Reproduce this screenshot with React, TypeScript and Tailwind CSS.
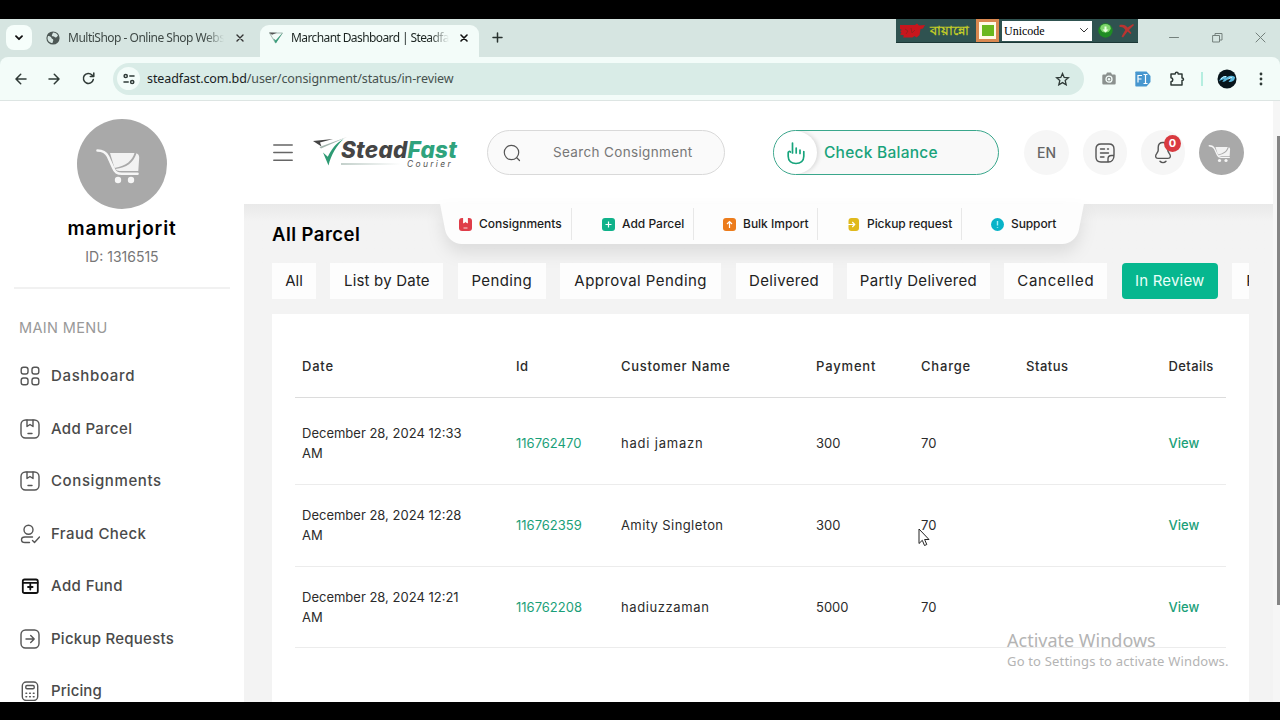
import type { ReactNode, SVGProps } from 'react';

function Svg({ children, ...props }: SVGProps<SVGSVGElement>) {
  return (
    <svg fill="none" stroke="currentColor" strokeLinecap="round" strokeLinejoin="round" {...props}>
      {children}
    </svg>
  );
}

function CartLogo({ size }: { size: number }) {
  return (
    <svg width={size} height={size} viewBox="0 0 90 90" className="shrink-0">
      <circle cx="45" cy="45" r="45" fill="#a9a9a9" />
      <path d="M20.500 31.500c6 0 8.500 2 10.500 6l5 11c2 5 4 6.300 9 6.300h15.500" fill="none" stroke="#f6f6f6" strokeWidth="2.600" strokeLinecap="round" />
      <path d="M33 34h24.500c-2 7-8 13-20 15z" fill="#f2f2f2" />
      <path d="M59.500 34.300c1.800.7 2.700 2 2.700 4.200L61.300 52H42.500c-2 0-3.200-.8-4-2 11-1.200 18-6.200 21-15.700z" fill="#f2f2f2" />
      <circle cx="41" cy="61" r="3.200" fill="#f6f6f6" />
      <circle cx="54" cy="61" r="3.200" fill="#f6f6f6" />
    </svg>
  );
}

function TabStrip() {
  return (
    <div className="flex h-[38px] items-end bg-[#d6e5e1] pl-[6px] font-['Noto_Sans',sans-serif] text-[12px] tracking-[-0.500px] text-[#3f4946]">
      <button className="mb-[7px] flex h-[25px] w-[26px] items-center justify-center rounded-[8px] bg-[#f6fefb]">
        <Svg width="8" height="6" viewBox="0 0 8 6" stroke="#111" strokeWidth="1.800"><path d="M1 1.200 4 4.200 7 1.200" /></Svg>
      </button>
      <div className="flex h-[38px] w-[228px] items-center pl-[14px]">
        <svg width="14" height="14" viewBox="0 0 14 14">
          <circle cx="7" cy="7" r="6.600" fill="#4d5855" />
          <path d="M2 5c1.500 0 3 .5 3.500 2 .4 1.200 2 .8 1.800 2.300L6.500 12C3.500 12 1.500 9.500 1.500 7zM7 1.500c2 0 4 1 5 3.200-1 .3-1 1.600-2.200 1.800-1.200.2-1.500-1.200-2.800-1.200S5.500 4 6.300 3.200z" fill="#d6e5e1" />
        </svg>
        <span className="ml-[8px] w-[156px] overflow-hidden [mask-image:linear-gradient(to_right,#000_88%,transparent)] whitespace-nowrap">MultiShop - Online Shop Webs</span>
        <Svg className="ml-[12px]" width="8" height="8" viewBox="0 0 8 8" stroke="#333" strokeWidth="1.400"><path d="m1 1 6 6M7 1 1 7" /></Svg>
      </div>
      <div className="flex h-[32px] w-[219px] items-center rounded-t-[9px] bg-[#f3fcf9] pb-[6px] pl-[9px] text-[#1b2421]">
        <svg width="14" height="12" viewBox="0 0 14 12">
          <path d="M.5 1h13L6.500 11z" fill="none" stroke="#9fb3ac" strokeWidth=".9" />
          <path d="M0 .5l8 .3-5 2z" fill="#555" />
          <path d="M13.800.5 6.800 11.500 4.300 6.500l2.500 1.800z" fill="#3b9f7d" />
        </svg>
        <span className="ml-[8px] w-[158px] overflow-hidden [mask-image:linear-gradient(to_right,#000_88%,transparent)] tracking-[-0.600px] whitespace-nowrap">Marchant Dashboard | Steadfas</span>
        <Svg className="ml-[11px]" width="8" height="8" viewBox="0 0 8 8" stroke="#111" strokeWidth="1.600"><path d="m1 1 6 6M7 1 1 7" /></Svg>
      </div>
      <Svg className="mb-[14px] ml-[13px]" width="11" height="11" viewBox="0 0 11 11" stroke="#28322f" strokeWidth="1.500"><path d="M5.500 1v9M1 5.500h9" /></Svg>
      <div className="mb-[14px] ml-auto flex items-center gap-[32px] pr-[14px] text-[#74807c]">
        <Svg width="11" height="11" viewBox="0 0 11 11"><path d="M.5 5.500h9" /></Svg>
        <Svg width="11" height="11" viewBox="0 0 11 11"><path d="M1 3.500h6.500V10H1zM3 3.500v-2h7V8H7.500" /></Svg>
        <Svg width="11" height="11" viewBox="0 0 11 11"><path d="m1 1 9 9M10 1l-9 9" /></Svg>
      </div>
    </div>
  );
}

function BijoyBar() {
  return (
    <div className="absolute top-[19px] left-[896px] flex h-[24px] w-[242px] items-center border-b border-[#1b3735] bg-[#2f5250]">
      <svg className="ml-[4px] shrink-0" width="26" height="16" viewBox="0 0 26 16">
        <path d="M0 2h15l2-1.500 2 2 6-.5-2 3.500-2.500.5-1 6-3 2.500-2-1.500-2 1.500H3l1-2-4-1 1.500-2L0 8l2-1-2-1z" fill="#c8161d" />
        <path d="m5 6 3 2-2 3M11 5l1 5 3-3" stroke="#96201f" fill="none" />
      </svg>
      <span className="ml-[3px] w-[40px] text-center text-[13px] leading-none font-bold whitespace-nowrap text-[#c0ca28]">বায়ান্নো</span>
      <div className="ml-[7px] flex h-[23px] w-[23px] shrink-0 items-center justify-center border-[3px] border-[#d98850] bg-[#fffbe6]">
        <div className="h-[11px] w-[12px] bg-[#6ab81e]" />
      </div>
      <div className="ml-[3px] flex h-[20px] w-[90px] shrink-0 items-center justify-between bg-white pr-[4px] pl-[2px] font-['Liberation_Serif',serif] text-[12px] text-black">
        Unicode
        <Svg width="8" height="5" viewBox="0 0 8 5" stroke="#333"><path d="m.5.5 3.500 3.500L7.500.5" /></Svg>
      </div>
      <svg className="ml-[6px] shrink-0" width="15" height="15" viewBox="0 0 15 15">
        <circle cx="7.500" cy="7.500" r="7.200" fill="#1f8c24" />
        <ellipse cx="7.500" cy="5.200" rx="5.200" ry="4.200" fill="#7fd46d" />
        <path d="M6.500 3.500h2V6.500h2l-3 3-3-3h2z" fill="#e7ffe0" />
      </svg>
      <svg className="ml-[6px] shrink-0" width="16" height="16" viewBox="0 0 16 16">
        <path d="M.5 2c4.500-1 6.500.5 8 2.500L14 1l1 1-5 5 2.500 3-1 1L8.500 8.500 4 14.500l-1.500-1L6.300 7C5 4.500 3.500 3.700.5 4z" fill="#ba3431" />
      </svg>
    </div>
  );
}

function Toolbar() {
  return (
    <div className="flex h-[44px] items-center rounded-t-[8px] border-b border-[#dde5e3] bg-[#f3fcf9] pl-[15px] font-['Noto_Sans',sans-serif] text-[#2f3a37]">
      <Svg width="12" height="12" viewBox="0 0 12 12" strokeWidth="1.500"><path d="M11 6H1.200M5.700 1.300 1 6l4.700 4.700" /></Svg>
      <Svg className="ml-[21px]" width="12" height="12" viewBox="0 0 12 12" strokeWidth="1.500"><path d="M1 6h9.800M6.300 1.300 11 6l-4.700 4.700" /></Svg>
      <Svg className="ml-[22px]" width="13" height="13" viewBox="0 0 13 13" strokeWidth="1.500"><path d="M11.300 7.500A5 5 0 1 1 10 2.900l1.500 1.500M11.800 1v3.500H8.300" /></Svg>
      <div className="ml-[18px] flex h-[32px] w-[971px] items-center rounded-full bg-[#d9ece7] pr-[14px] pl-[4px]">
        <div className="flex h-[23px] w-[23px] items-center justify-center rounded-full bg-[#f3fcf9]">
          <Svg width="12" height="12" viewBox="0 0 12 12" strokeWidth="1.500"><circle cx="2.700" cy="3" r="1.600" /><path d="M6.800 3H11M1 9h4.200" /><circle cx="9.200" cy="9" r="1.600" /></Svg>
        </div>
        <span className="ml-[7px] pt-[1px] text-[12.500px] tracking-[-0.100px] whitespace-nowrap text-[#46514e]"><span className="text-[#18211e]">steadfast.com.bd</span>/user/consignment/status/in-review</span>
        <Svg className="ml-auto" width="15" height="14" viewBox="0 0 15 14" strokeWidth="1.300" strokeLinejoin="miter"><path d="m7.500 1.500 1.700 3.900 4.200.4-3.200 2.800 1 4.200-3.700-2.200-3.700 2.200 1-4.200L1.600 5.800l4.200-.4z" /></Svg>
      </div>
      <svg className="ml-[18px]" width="14" height="13" viewBox="0 0 14 13">
        <path d="M1.500 2.500H4L5 .5h4l1 2h2.500q1.200 0 1.200 1.200v7.500q0 1.300-1.200 1.300h-11Q.3 12.500.3 11.200V3.700q0-1.200 1.200-1.200z" fill="#8b918f" />
        <circle cx="7" cy="7.200" r="3" fill="none" stroke="#f3fcf9" strokeWidth="1.300" /><circle cx="7" cy="7.200" r="1.200" fill="#f3fcf9" />
      </svg>
      <svg className="ml-[19px]" width="16" height="16" viewBox="0 0 16 16">
        <path d="M1 .5h10.500L15.500 5v6l-4 4.500H1q-.7 0-.7-.7V1.200Q.300.500 1 .500z" fill="#4797cf" />
        <path d="M3 11.500V4.500h4M3 8h3.500M8.500 3.500h1.200q.8 0 .8.8v7.400q0 .8-.8.800H8.500M12.500 3.500h-1.200q-.8 0-.8.800v7.400q0 .8.8.8h1.200" stroke="#fff" fill="none" strokeWidth="1.200" />
      </svg>
      <Svg className="ml-[18px]" width="16" height="16" viewBox="0 0 16 16" strokeWidth="1.500"><path d="M2 3h4.200c0-2.300 3-2.300 3 0H13v4c2 0 2 2.600 0 2.600V14H2v-3.200c2.400-.3 2.400-3.700 0-4z" /></Svg>
      <div className="ml-[16px] h-[14px] w-[2px] bg-[#b5eee0]" />
      <svg className="ml-[14px]" width="20" height="20" viewBox="0 0 20 20">
        <circle cx="10" cy="10" r="9.500" fill="#07141b" />
        <path d="M2 12.500c1-4 4-6 8-5.500l-1.500 2.500C11 6.500 15 6 18 8c0 3-2 5-6.500 5l2.500-3.500c-4 0-5 3.500-8.500 3.500 0-1 1-2 2-2.500-2 0-4 .5-5.500 2z" fill="#5bb9de" />
        <path d="M4 10c2-2 3-2.500 5-2.500M11 10.500c1-1.500 3-2 4-2" stroke="#d5f3ff" fill="none" />
      </svg>
      <svg className="ml-[22px]" width="4" height="16" viewBox="0 0 4 16" fill="#2f3a37"><circle cx="2" cy="3" r="1.400" /><circle cx="2" cy="8" r="1.400" /><circle cx="2" cy="13" r="1.400" /></svg>
    </div>
  );
}

const boxIcon = (
  <>
    <rect x="1" y="1" width="18" height="18" rx="4.500" />
    <path d="M7 1v6.500L10 5.500l3 2V1M8 14.500h4" />
  </>
);

const menu: { label: string; track: string; icon: ReactNode; dark?: boolean }[] = [
  { label: 'Dashboard', track: 'tracking-[0.650px]', icon: <><rect x="1.200" y="1.200" width="6.800" height="6.800" rx="2.200" /><rect x="12" y="1.200" width="6.800" height="6.800" rx="2.200" /><rect x="1.200" y="12" width="6.800" height="6.800" rx="2.200" /><rect x="12" y="12" width="6.800" height="6.800" rx="2.200" /></> },
  { label: 'Add Parcel', track: 'tracking-[0.350px]', icon: boxIcon },
  { label: 'Consignments', track: 'tracking-[0.600px]', icon: boxIcon },
  { label: 'Fraud Check', track: 'tracking-[0.400px]', icon: <><circle cx="8.500" cy="5.800" r="4.500" /><path d="M12.500 13H5c-2.400 0-3.500 1.200-3.500 2.700S2.600 18.500 5 18.500h4.500M12.500 16.500l2 2L19.500 13" /></> },
  { label: 'Add Fund', track: 'tracking-[0.400px]', dark: true, icon: <><rect x="2.800" y="3.500" width="15" height="13.500" rx="1.800" /><path d="M3 6.800h14.600M10.300 8.500v5M8 11h4.600" /></> },
  { label: 'Pickup Requests', track: 'tracking-[0.250px]', icon: <><rect x="1" y="1" width="18" height="18" rx="4.500" /><path d="M6 10h8M10.700 6.500 14.200 10l-3.500 3.500" /></> },
  { label: 'Pricing', track: 'tracking-[0.100px]', icon: <><rect x="2.300" y="1" width="15.400" height="18.500" rx="4" /><rect x="5.800" y="4.500" width="8.400" height="3.200" rx="1.200" /><path d="M6 12.300h.6M9.700 12.300h.6M13.400 12.300h.6M6 15.800h.6M9.700 15.800h.6M13.400 15.800h.6" strokeWidth="1.600" /></> },
];

function Sidebar() {
  return (
    <aside className="flex w-[244px] shrink-0 flex-col bg-white">
      <div className="flex shrink-0 flex-col items-center pt-[18px]">
        <CartLogo size={90} />
        <div className="mt-[7px] text-[19px] leading-[26px] font-semibold tracking-[0.850px] text-black">mamurjorit</div>
        <div className="mt-[5px] text-[14px] leading-[20px] text-[#777]">ID: 1316515</div>
      </div>
      <div className="mx-[14px] mt-[20px] h-[2px] shrink-0 bg-[#f1f1f1]" />
      <div className="mt-[29px] ml-[19px] shrink-0 text-[14.500px] leading-[20px] tracking-[0.350px] text-[#999]">MAIN MENU</div>
      <nav className="mt-[12px] flex shrink-0 flex-col">
        {menu.map((m) => (
          <a key={m.label} className="flex h-[52.500px] shrink-0 items-center gap-[11px] pl-[20px] text-[15px] font-medium text-[#4a4a4a]">
            <Svg width="20" height="20" viewBox="0 0 20 20" strokeWidth={m.dark ? 1.8 : 1.4} stroke={m.dark ? '#111' : '#555'}>{m.icon}</Svg>
            <span className={m.track}>{m.label}</span>
          </a>
        ))}
      </nav>
    </aside>
  );
}

function BrandLogo() {
  return (
    <div className="ml-[20px] flex w-[146px] items-start">
      <svg className="shrink-0" width="34" height="30" viewBox="0 0 34 30">
        <path d="M0 4 20 2 7 5.500l1.500 4z" fill="#444" />
        <path d="M34 0 8 11.500 6.500 10z" fill="#a3b5ae" />
        <path d="M30.500 2C24 8 18 18 15.500 28.500L10 15.500l4.800 4.200C18 13 23 6 30.500 2z" fill="#2d9a73" />
      </svg>
      <div className="-ml-[6px] flex flex-col pt-[3px]">
        <div className="text-[22.500px] leading-[20px] font-extrabold tracking-[0.250px] whitespace-nowrap italic text-[#454545]">Stead<span className="text-[#2fa37d]">Fast</span></div>
        <div className="flex items-center">
          <span className="h-[2px] w-[60px] bg-linear-to-r from-[#c3d0cb] to-transparent" />
          <span className="ml-[6px] text-[8.500px] leading-[8px] tracking-[2.300px] text-[#555] italic">Courier</span>
        </div>
      </div>
    </div>
  );
}

function Header() {
  return (
    <header className="flex h-[103px] shrink-0 items-center bg-white pl-[29px]">
      <Svg width="20" height="18" viewBox="0 0 20 18" stroke="#666" strokeWidth="1.500"><path d="M.8 1h18.400M.8 8.500h18.400M.8 16.300h18.400" /></Svg>
      <BrandLogo />
      <div className="ml-[28px] flex h-[45px] w-[238px] items-center rounded-full border border-[#d9d9d9] bg-[#fafafa] pl-[15px]">
        <Svg width="18" height="18" viewBox="0 0 18 18" stroke="#555" strokeWidth="1.200"><circle cx="8.500" cy="8.500" r="7.200" /><path d="m14 14 2.500 2.500" /></Svg>
        <span className="ml-[32px] text-[13.500px] tracking-[0.350px] whitespace-nowrap text-[#777]">Search Consignment</span>
      </div>
      <div className="ml-[48px] flex h-[45px] w-[226px] items-center overflow-hidden rounded-full border border-[#3aa78c] bg-[#f9f9f9]">
        <div className="flex h-[43px] w-[43px] items-center justify-center rounded-full bg-white shadow-[2px_0_4px_rgba(0,0,0,0.12)]">
          <Svg width="20" height="24" viewBox="0 0 20 24" stroke="#17a47c" strokeWidth="1.700"><path d="M2.200 11.500v3.800c0 4.500 3.300 7.200 7.800 7.200s7.800-2.700 7.800-7.200v-4.800M6.500 12V2M10.200 12V7M14 12.500V9M2.200 11.500c0-1 1.500-1.500 2.200-.5" /></Svg>
        </div>
        <span className="ml-[7px] text-[15.500px] font-medium tracking-[0.250px] whitespace-nowrap text-[#18a37b]">Check Balance</span>
      </div>
      <div className="ml-[25px] flex items-center gap-[14px] text-[#666]">
        <div className="flex h-[45px] w-[45px] items-center justify-center rounded-full bg-[#f6f6f6] text-[14px] font-medium">EN</div>
        <div className="flex h-[45px] w-[44px] items-center justify-center rounded-full bg-[#f6f6f6]">
          <Svg width="20" height="20" viewBox="0 0 20 20" stroke="#555" strokeWidth="1.400"><path d="M19 12V6c0-3-2-5-5-5H6C3 1 1 3 1 6v8c0 3 2 5 5 5h7.500c3 0 5.500-2.500 5.500-6.500h-2.500c-2.500 0-3.500 1-3.500 3.500v2.800M5.500 6h4M5.500 10h8M5.500 14h3.500M12.500 6h1" /></Svg>
        </div>
        <div className="relative flex h-[45px] w-[44px] items-center justify-center rounded-full bg-[#f6f6f6]">
          <Svg width="18" height="23" viewBox="0 0 18 23" stroke="#555" strokeWidth="1.400"><path d="M9 1.500c-3 0-4.800 2-4.800 5v2.700c0 1.200-.6 2-1.400 3.200-2 2.600-1.400 5 1.200 5h10c2.600 0 3.200-2.400 1.200-5-.8-1.200-1.400-2-1.400-3.200V6.500c0-3-1.800-5-4.800-5zM6 20.300c1.500 1.800 4.500 1.800 6 0" /></Svg>
          <span className="absolute top-[5px] right-[4px] flex h-[17px] w-[17px] items-center justify-center rounded-full bg-[#d93a40] text-[11px] font-bold text-white">0</span>
        </div>
        <CartLogo size={45} />
      </div>
    </header>
  );
}

const quick: { label: string; box: string; icon: ReactNode }[] = [
  { label: 'Consignments', box: 'w-[132px] pl-[19px] border-r', icon: <><rect width="13" height="13" rx="3" fill="#df3d49" /><path d="M4.500 0v5l2-1.200 2 1.200V0zM4.500 10h4" fill="#fff" stroke="#fff" strokeWidth=".8" /></> },
  { label: 'Add Parcel', box: 'w-[122px] pl-[30px] border-r', icon: <><rect width="13" height="13" rx="3" fill="#10b28a" /><path d="M6.500 3.500v6M3.500 6.500h6" stroke="#fff" strokeWidth="1.200" /></> },
  { label: 'Bulk Import', box: 'w-[124px] pl-[29px] border-r', icon: <><rect width="13" height="13" rx="3" fill="#ec7c1c" /><path d="M6.500 10V3.500M4 6l2.500-2.500L9 6" stroke="#fff" fill="none" strokeWidth="1.200" /></> },
  { label: 'Pickup request', box: 'w-[144px] pl-[29px] border-r tracking-[-0.050px]', icon: <><rect x="1.500" width="10.500" height="13" rx="3" fill="#e0b91c" /><path d="M0 6.500h7.500M5.300 4l2.400 2.500L5.300 9" stroke="#fff" fill="none" strokeWidth="1.200" /></> },
  { label: 'Support', box: 'w-[122px] pl-[29px] tracking-[-0.100px]', icon: <><circle cx="6.500" cy="6.500" r="6.500" fill="#08b3c8" /><path d="M6.500 3v4.500M6.500 9.300v.7" stroke="#a6f0f8" strokeWidth="1.400" /></> },
];

function QuickBar() {
  return (
    <div className="relative flex h-[40px] w-[644px] items-center">
      <div className="absolute inset-0 drop-shadow-[0_9px_8px_rgba(0,0,0,0.09)]">
        <span className="absolute inset-y-0 left-[4px] w-[60%] skew-x-[11deg] rounded-bl-[14px] bg-[#fdfdfd]" />
        <span className="absolute inset-y-0 right-[4px] w-[60%] -skew-x-[11deg] rounded-br-[14px] bg-[#fdfdfd]" />
      </div>
      {quick.map((q) => (
        <a key={q.label} className={`relative flex h-[32px] items-center border-[#e8e8e8] text-[12px] font-medium whitespace-nowrap text-[#1c1c1c] ${q.box}`}>
          <svg className="mr-[7px] shrink-0" width="13" height="13" viewBox="0 0 13 13">{q.icon}</svg>
          {q.label}
        </a>
      ))}
    </div>
  );
}

const filters = [
  ['All', 'w-[44px]'],
  ['List by Date', 'w-[113px] tracking-[0.200px]'],
  ['Pending', 'w-[88px] tracking-[0.400px]'],
  ['Approval Pending', 'w-[161px] tracking-[0.450px]'],
  ['Delivered', 'w-[97px] tracking-[0.350px]'],
  ['Partly Delivered', 'w-[143px] tracking-[0.320px]'],
  ['Cancelled', 'w-[103px] tracking-[0.700px]'],
  ['In Review', 'w-[96px] tracking-[0.200px]'],
  ['Pending', 'w-[86px]'],
];

const rows = [
  ['December 28, 2024 12:33 AM', '116762470', 'hadi jamazn', '300', '70', 'tracking-[0.800px]'],
  ['December 28, 2024 12:28 AM', '116762359', 'Amity Singleton', '300', '70', 'tracking-[0.400px]'],
  ['December 28, 2024 12:21 AM', '116762208', 'hadiuzzaman', '5000', '70', 'tracking-[0.600px]'],
];

const gridCols = 'grid grid-cols-[214px_105px_195px_105px_105px_142.5px_66px] items-center pl-[7px]';

function ParcelTable() {
  return (
    <section className="ml-[28px] w-[977px] grow bg-white px-[23px] pt-[20px] text-[13px] text-[#2b2b2b]">
      <div className={`${gridCols} h-[64px] border-b border-[#dcdcdc] pt-[2px] font-medium`}>
        <span className="tracking-[0.800px]">Date</span>
        <span className="tracking-[0.500px]">Id</span>
        <span className="tracking-[0.700px]">Customer Name</span>
        <span className="tracking-[0.850px]">Payment</span>
        <span className="tracking-[0.800px]">Charge</span>
        <span className="tracking-[0.500px]">Status</span>
        <span className="tracking-[0.400px]">Details</span>
      </div>
      <div className="pt-[5px]">
        {rows.map(([date, id, name, pay, charge, track]) => (
          <div key={id} className={`${gridCols} h-[81.800px] border-b border-[#ececec]`}>
            <span className="w-[175px] leading-[20px]">{date}</span>
            <span className="pt-[1px] text-[#1b9f79]">{id}</span>
            <span className={`pt-[1px] ${track}`}>{name}</span>
            <span className="pt-[1px]">{pay}</span>
            <span className="pt-[1px]">{charge}</span>
            <span />
            <span className="pt-[1px] font-medium text-[#1b9f79]">View</span>
          </div>
        ))}
      </div>
    </section>
  );
}

export default function App() {
  return (
    <div className="relative flex h-[720px] w-[1280px] flex-col overflow-hidden bg-black py-[19px] pb-[18px] font-[Inter,sans-serif]">
      <div className="bg-[#d6e5e1]">
        <TabStrip />
        <Toolbar />
      </div>
      <div className="flex min-h-0 grow overflow-hidden bg-[#f3f3f3]">
        <Sidebar />
        <main className="flex w-[1029px] shrink-0 flex-col">
          <Header />
          <div className="flex h-[59px] shrink-0 items-start bg-linear-to-b from-[#e9e9e9] to-[#f3f3f3] to-30%">
            <h1 className="mt-[16px] ml-[28px] w-[168px] text-[18.500px] leading-[28px] font-semibold tracking-[0.450px] text-black">All Parcel</h1>
            <QuickBar />
          </div>
          <div className="relative ml-[28px] flex w-[977px] shrink-0 gap-[14.400px] overflow-hidden">
            {filters.map(([label, width], i) => (
              <button key={i} className={`flex h-[36px] shrink-0 items-center justify-center text-[15px] whitespace-nowrap ${width} ${label === 'In Review' ? 'rounded-[4px] bg-[#06b78f] text-[#eafff9]' : 'bg-[#fdfdfd] text-[#222]'}`}>{label}</button>
            ))}
          </div>
          <div className="h-[15px] shrink-0" />
          <ParcelTable />
        </main>
        <div className="flex w-[7px] justify-end bg-[#f6f6f6] pt-[35px]">
          <div className="h-[469px] w-[3px] bg-[#858585]" />
        </div>
      </div>
      <BijoyBar />
      <div className="absolute top-[629px] left-[1007px] font-['Noto_Sans',sans-serif] whitespace-nowrap text-[#b4b4b4]">
        <div className="text-[18px] leading-[23px]">Activate Windows</div>
        <div className="-mt-[1px] text-[13px] leading-[20px] tracking-[0.180px]">Go to Settings to activate Windows.</div>
      </div>
      <svg className="absolute top-[528px] left-[918px]" width="12" height="19" viewBox="0 0 12 19">
        <path d="M1 1v14.500l3.300-3.200 2.200 5.200 2.300-1-2.200-5H11z" fill="#fff" stroke="#222" strokeWidth="1" />
      </svg>
    </div>
  );
}
